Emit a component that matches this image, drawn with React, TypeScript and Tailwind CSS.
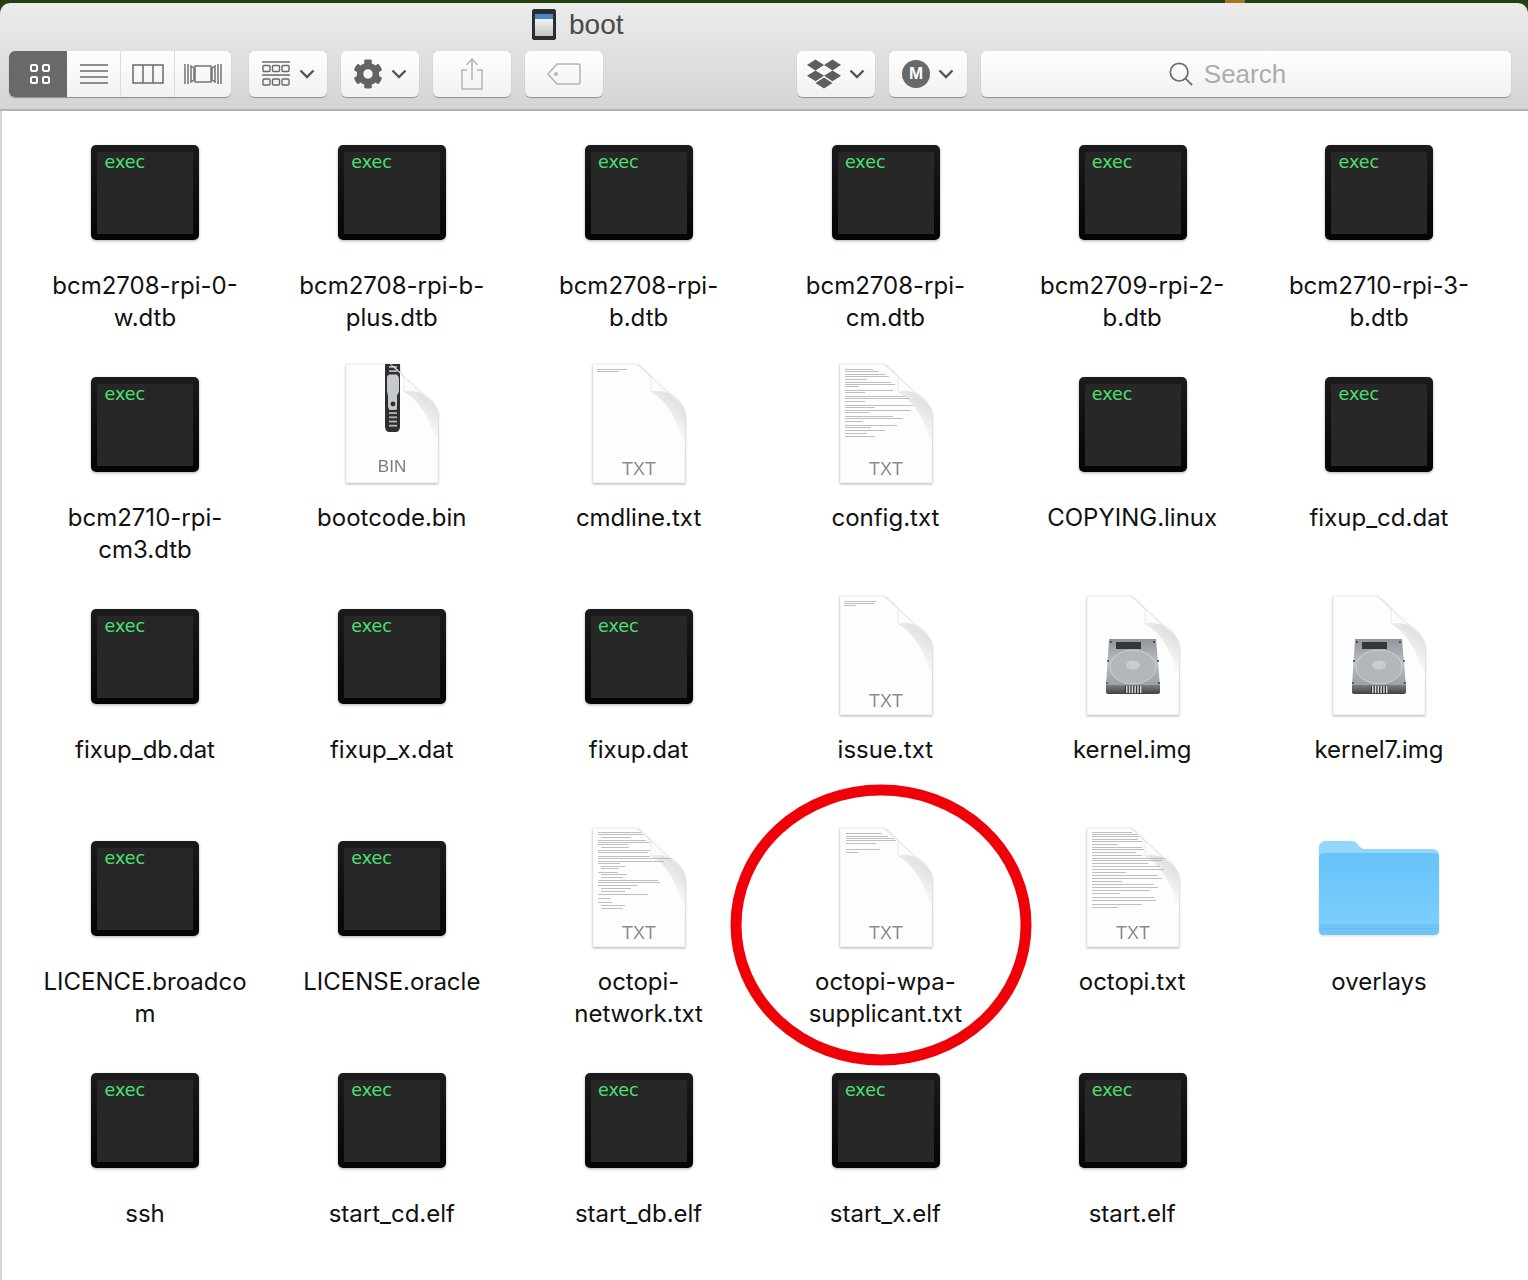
import { FaCog, FaDropbox } from "react-icons/fa";

type Item = {
  lines: string[];
  kind: "exec" | "txt" | "bin" | "img" | "folder";
  text?: number[][];
};

// y, x, width of the tiny lines on the text document previews
const cmdlineText = [[5, 4, 30], [7, 4, 22]];
const issueText = [[5, 4, 32], [7, 4, 30], [9, 4, 12]];
const configText = [
  [5, 5, 28], [7, 5, 34], [10, 5, 40], [12, 5, 44], [15, 5, 22], [18, 5, 46], [20, 5, 50], [22, 5, 14], [26, 5, 48],
  [28, 5, 20], [32, 5, 60], [34, 5, 64], [37, 5, 20], [41, 5, 68], [43, 5, 30], [46, 5, 66], [48, 5, 24], [52, 5, 48],
  [54, 5, 58], [57, 5, 18], [61, 5, 52], [63, 5, 26], [66, 5, 40], [69, 5, 22], [72, 5, 30],
];
const networkText = [
  [4, 5, 50], [6, 5, 52], [9, 8, 30], [12, 5, 48], [14, 5, 54], [16, 5, 30], [19, 8, 28], [22, 5, 54], [24, 5, 50],
  [28, 5, 60], [30, 5, 74], [33, 5, 66], [35, 5, 22], [38, 8, 24], [40, 8, 18], [44, 5, 20], [46, 8, 26], [49, 8, 22],
  [52, 5, 60], [54, 5, 62], [57, 5, 40], [60, 8, 30], [63, 8, 24], [66, 5, 50], [70, 5, 12], [74, 5, 14], [77, 8, 24],
  [80, 8, 22],
];
const wpaText = [[5, 6, 36], [8, 6, 42], [10, 6, 50], [12, 6, 50], [15, 6, 30], [21, 6, 34], [24, 6, 12]];
const octopiText = [
  [4, 5, 40], [6, 5, 52], [8, 5, 50], [11, 5, 46], [13, 5, 50], [16, 5, 26], [19, 5, 50], [21, 5, 52], [24, 5, 44],
  [27, 5, 50], [30, 5, 74], [32, 5, 70], [35, 5, 56], [38, 5, 68], [41, 5, 72], [44, 5, 34], [47, 5, 66], [50, 5, 70],
  [53, 5, 30], [56, 5, 62], [59, 5, 66], [62, 5, 58], [65, 5, 28], [69, 5, 62], [72, 5, 64], [76, 5, 50], [79, 5, 26],
];

const items: Item[] = [
  { lines: ["bcm2708-rpi-0-", "w.dtb"], kind: "exec" },
  { lines: ["bcm2708-rpi-b-", "plus.dtb"], kind: "exec" },
  { lines: ["bcm2708-rpi-", "b.dtb"], kind: "exec" },
  { lines: ["bcm2708-rpi-", "cm.dtb"], kind: "exec" },
  { lines: ["bcm2709-rpi-2-", "b.dtb"], kind: "exec" },
  { lines: ["bcm2710-rpi-3-", "b.dtb"], kind: "exec" },
  { lines: ["bcm2710-rpi-", "cm3.dtb"], kind: "exec" },
  { lines: ["bootcode.bin"], kind: "bin" },
  { lines: ["cmdline.txt"], kind: "txt", text: cmdlineText },
  { lines: ["config.txt"], kind: "txt", text: configText },
  { lines: ["COPYING.linux"], kind: "exec" },
  { lines: ["fixup_cd.dat"], kind: "exec" },
  { lines: ["fixup_db.dat"], kind: "exec" },
  { lines: ["fixup_x.dat"], kind: "exec" },
  { lines: ["fixup.dat"], kind: "exec" },
  { lines: ["issue.txt"], kind: "txt", text: issueText },
  { lines: ["kernel.img"], kind: "img" },
  { lines: ["kernel7.img"], kind: "img" },
  { lines: ["LICENCE.broadco", "m"], kind: "exec" },
  { lines: ["LICENSE.oracle"], kind: "exec" },
  { lines: ["octopi-", "network.txt"], kind: "txt", text: networkText },
  { lines: ["octopi-wpa-", "supplicant.txt"], kind: "txt", text: wpaText },
  { lines: ["octopi.txt"], kind: "txt", text: octopiText },
  { lines: ["overlays"], kind: "folder" },
  { lines: ["ssh"], kind: "exec" },
  { lines: ["start_cd.elf"], kind: "exec" },
  { lines: ["start_db.elf"], kind: "exec" },
  { lines: ["start_x.elf"], kind: "exec" },
  { lines: ["start.elf"], kind: "exec" },
];

const ExecIcon = () => (
  <div className="w-[108px] h-[95px] ml-[1px] rounded-[5px] bg-gradient-to-b from-[#1b1b1b] to-[#050505] pt-[7px] px-[6px] pb-[6px] shadow-[0_1px_3px_rgba(40,60,80,0.4)]">
    <div className="w-full h-full bg-[#272727] pl-[7px] text-[17.5px] leading-[20px] text-[#4be06e] font-['DejaVu_Sans',sans-serif]">
      exec
    </div>
  </div>
);

const DocPage = ({ children }: { children?: React.ReactNode }) => (
  <svg width="96" height="122" viewBox="-2 -1 96 122" className="ml-[1px] drop-shadow-[0_1px_1px_rgba(0,0,0,0.3)]">
    <defs>
      <linearGradient id="flap" x1="0" y1="0" x2="1" y2="1">
        <stop offset="0" stopColor="#ffffff" />
        <stop offset="0.7" stopColor="#fafafa" />
        <stop offset="1" stopColor="#dedede" />
      </linearGradient>
      <linearGradient id="under" gradientUnits="userSpaceOnUse" x1="90" y1="40" x2="70" y2="62">
        <stop offset="0" stopColor="#dedede" />
        <stop offset="1" stopColor="#fdfdfd" />
      </linearGradient>
    </defs>
    <path d="M0 0 H44 L85 38 C90 43 92 47 92 52 V119 H0 Z" fill="#fdfdfd" stroke="#e2e2e2" strokeWidth="0.5" />
    <path d="M58 28 C72 26 84 30 92 50 V88 C88 62 76 38 58 28 Z" fill="url(#under)" />
    {children}
    <path d="M44 0 C50 4 56 9 58 14 V28 C72 26 85 30 91 47 C90 43 88 41 85 38 Z" fill="url(#flap)" stroke="#dadada" strokeWidth="0.5" />
  </svg>
);

const TxtIcon = ({ text }: { text: number[][] }) => (
  <DocPage>
    {text.map(([y, x, w], i) => {
      const maxX = y < 14 ? 44 + y : y < 29 ? 57 : 86;
      return <rect key={i} x={x} y={y} width={Math.min(w, maxX - x)} height="0.8" fill="#b0b0b0" />;
    })}
    <text x="46" y="111" textAnchor="middle" fontSize="18" fontFamily="'Liberation Sans', sans-serif" fill="#8a8a8a">
      TXT
    </text>
  </DocPage>
);

const BinIcon = () => (
  <DocPage>
    <path d="M39 0 H54 V63 C54 66 52 68 50 68 H43 C41 68 39 66 39 63 Z" fill="#2f2f2f" />
    {[...Array(15)].map((_, i) => (
      <rect key={i} x="43" y={2 + i * 4.2} width="8" height="1.8" fill="#b4b4b4" />
    ))}
    <path d="M43 11 H50 C52 11 53 13 53 15 V27 C53 29 51 30 51 32 V42 C51 45 49 46 47 46 C44 46 42 45 42 42 V32 C42 30 41 29 41 27 V15 C41 13 41 11 43 11 Z" fill="#c3c9cd" />
    <circle cx="47" cy="40" r="2.4" fill="#303030" />
    <text x="46" y="108" textAnchor="middle" fontSize="17" fontFamily="'Liberation Sans', sans-serif" fill="#7c7c7c">
      BIN
    </text>
  </DocPage>
);

const ImgIcon = () => (
  <DocPage>
    <defs>
      <linearGradient id="disk" x1="0" y1="0" x2="0" y2="1">
        <stop offset="0" stopColor="#8f959a" />
        <stop offset="0.5" stopColor="#b8bdc1" />
        <stop offset="1" stopColor="#9a9fa3" />
      </linearGradient>
      <linearGradient id="diskBase" x1="0" y1="0" x2="0" y2="1">
        <stop offset="0" stopColor="#7a7e82" />
        <stop offset="1" stopColor="#3f4245" />
      </linearGradient>
    </defs>
    <path d="M22 43 H69 L73 90 H19 Z" fill="url(#disk)" />
    <path d="M19 89 H73 V96 C73 97 72 98 71 98 H21 C20 98 19 97 19 96 Z" fill="url(#diskBase)" />
    <rect x="29" y="46" width="25" height="7" fill="#34373a" />
    <ellipse cx="46" cy="71" rx="23" ry="17" fill="#b2b7bb" stroke="#d3d7da" strokeWidth="0.8" />
    <ellipse cx="46" cy="69" rx="7" ry="4.5" fill="#c9cdd0" />
    {[[24, 46], [67, 46], [21, 65], [71, 65], [20, 87], [72, 87]].map(([cx, cy]) => (
      <circle key={`${cx}-${cy}`} cx={cx} cy={cy} r="0.9" fill="#333" />
    ))}
    <rect x="38" y="90" width="17" height="7" fill="#2e2e2e" />
    {[0, 1, 2, 3, 4, 5].map((i) => (
      <rect key={i} x={39 + i * 2.8} y="90" width="1.5" height="7" fill="#dcdcdc" />
    ))}
  </DocPage>
);

const FolderIcon = () => (
  <svg width="120" height="96" viewBox="0 0 120 96" className="ml-[1px] drop-shadow-[0_1px_1px_rgba(0,0,0,0.15)]">
    <defs>
      <linearGradient id="folderBody" x1="0" y1="0" x2="0" y2="1">
        <stop offset="0" stopColor="#67c3fa" />
        <stop offset="1" stopColor="#7dd0fd" />
      </linearGradient>
    </defs>
    <path d="M0 8 C0 3 3 1 7 1 H32 C37 1 38 4 41 7 C43 9 44 9 47 9 H113 C118 9 120 12 120 16 V30 H0 Z" fill="#92d8fe" />
    <path d="M0 17 C0 14 2 13 5 13 H115 C118 13 120 14 120 17 V90 C120 93 118 95 115 95 H5 C2 95 0 93 0 90 Z" fill="url(#folderBody)" />
    <path d="M0 84 H120 V90 C120 93 118 95 115 95 H5 C2 95 0 93 0 90 Z" fill="#70c4f6" />
    <rect x="0" y="88" width="120" height="1" fill="#66bbf0" />
  </svg>
);

const FileIcon = ({ item }: { item: Item }) => {
  switch (item.kind) {
    case "exec":
      return <ExecIcon />;
    case "txt":
      return <TxtIcon text={item.text ?? []} />;
    case "bin":
      return <BinIcon />;
    case "img":
      return <ImgIcon />;
    default:
      return <FolderIcon />;
  }
};

const Chevron = () => (
  <svg width="16" height="10" viewBox="0 0 16 10" fill="none" stroke="#555" strokeWidth="2.4">
    <path d="M1.5 1.5 L8 8 L14.5 1.5" />
  </svg>
);

const ToolButton = ({ width, children }: { width: string; children: React.ReactNode }) => (
  <div
    className={`${width} h-[46px] flex items-center justify-center gap-[8px] rounded-[6px] bg-gradient-to-b from-white to-[#f1f1f1] shadow-[0_1px_1px_rgba(0,0,0,0.35)]`}
  >
    {children}
  </div>
);

export default function App() {
  return (
    <div className="relative w-[1528px] h-[1280px] overflow-hidden bg-[#23400e] pt-[3px] font-['Liberation_Sans',Arial,sans-serif]">
      <div className="absolute top-0 left-[1225px] w-[20px] h-[3px] bg-[#a8731c]" />
      {/* Title bar and toolbar */}
      <header className="h-[108px] rounded-t-[10px] bg-gradient-to-b from-[#ececec] to-[#d4d4d4] border-b-2 border-[#b4b4b4]">
        <div className="h-[48px] pl-[532px] pb-[6px] flex items-center gap-[13px]">
          <svg width="24" height="31" viewBox="0 0 24 31">
            <defs>
              <linearGradient id="sdBody" x1="0" y1="0" x2="0" y2="1">
                <stop offset="0" stopColor="#f2f2f2" />
                <stop offset="1" stopColor="#c4c4c4" />
              </linearGradient>
            </defs>
            <path d="M0 2 C0 1 1 0 2 0 H22 C23 0 24 1 24 2 V29 C24 30 23 31 22 31 H2 C1 31 0 30 0 29 Z" fill="#2a2d30" />
            <rect x="3" y="5" width="18" height="5" fill="#4a86cf" />
            <rect x="3" y="10" width="18" height="17" fill="url(#sdBody)" />
          </svg>
          <span className="mt-[2px] text-[28px] leading-[32px] text-[#4a4a4a]">boot</span>
        </div>
        <div className="flex pl-[9px]">
          {/* View switcher */}
          <div className="flex h-[46px] w-[222px] rounded-[6px] bg-gradient-to-b from-white to-[#f1f1f1] shadow-[0_1px_1px_rgba(0,0,0,0.35)]">
            <div className="w-[58px] pl-[3px] flex items-center justify-center rounded-l-[6px] bg-[#696969]">
              <svg width="22" height="22" viewBox="0 0 22 22" fill="none" stroke="#fff" strokeWidth="2">
                <rect x="2" y="2" width="6" height="6" rx="1.5" />
                <rect x="14" y="2" width="6" height="6" rx="1.5" />
                <rect x="2" y="14" width="6" height="6" rx="1.5" />
                <rect x="14" y="14" width="6" height="6" rx="1.5" />
              </svg>
            </div>
            <div className="w-[54px] flex items-center justify-center border-r border-[#dcdcdc]">
              <svg width="30" height="22" viewBox="0 0 30 22" stroke="#6a6a6a" strokeWidth="1.4">
                <path d="M1 2 H29 M1 8 H29 M1 14 H29 M1 20 H29" />
              </svg>
            </div>
            <div className="w-[54px] flex items-center justify-center border-r border-[#dcdcdc]">
              <svg width="32" height="20" viewBox="0 0 32 20" fill="none" stroke="#6a6a6a" strokeWidth="1.5">
                <rect x="1" y="1" width="30" height="18" />
                <path d="M11 1 V19 M21 1 V19" />
              </svg>
            </div>
            <div className="flex-1 flex items-center justify-center">
              <svg width="38" height="22" viewBox="0 0 38 22" fill="none" stroke="#6a6a6a" strokeWidth="1.4">
                <rect x="11" y="3" width="16" height="16" />
                <path d="M1 1 V21 M4 1 V21 M7 3 L10 5 V17 L7 19 Z M37 1 V21 M34 1 V21 M31 3 L28 5 V17 L31 19 Z" />
              </svg>
            </div>
          </div>

          <div className="w-[18px]" />
          <ToolButton width="w-[78px]">
            <svg width="30" height="27" viewBox="0 0 30 27" fill="none" stroke="#6a6a6a" strokeWidth="1.4">
              <path d="M1 1 H29 M1 14 H29" />
              <rect x="2" y="4.5" width="7" height="6" rx="1" />
              <rect x="11.5" y="4.5" width="7" height="6" rx="1" />
              <rect x="21" y="4.5" width="7" height="6" rx="1" />
              <rect x="2" y="18" width="7" height="6" rx="1" />
              <rect x="11.5" y="18" width="7" height="6" rx="1" />
              <rect x="21" y="18" width="7" height="6" rx="1" />
            </svg>
            <Chevron />
          </ToolButton>
          <div className="w-[14px]" />
          <ToolButton width="w-[78px]">
            <FaCog size={30} color="#636363" />
            <Chevron />
          </ToolButton>
          <div className="w-[14px]" />
          <ToolButton width="w-[78px]">
            <svg width="24" height="32" viewBox="0 0 24 32" fill="none" stroke="#b4b4b4" strokeWidth="1.5">
              <path d="M7 12 H2 V31 H22 V12 H17 M12 22 V1 M6.5 7 L12 1 L17.5 7" />
            </svg>
          </ToolButton>
          <div className="w-[14px]" />
          <ToolButton width="w-[78px]">
            <svg width="34" height="22" viewBox="0 0 34 22" fill="none" stroke="#b4b4b4" strokeWidth="1.5">
              <path d="M10 1 H31 C32 1 33 2 33 3 V19 C33 20 32 21 31 21 H10 L1 11 Z" />
              <circle cx="9" cy="11" r="1.2" />
            </svg>
          </ToolButton>

          <div className="w-[194px]" />
          <ToolButton width="w-[78px]">
            <FaDropbox size={34} color="#5e5e5e" />
            <Chevron />
          </ToolButton>
          <div className="w-[14px]" />
          <ToolButton width="w-[78px]">
            <div className="w-[28px] h-[28px] rounded-full bg-[#696969] text-white text-[17px] font-bold flex items-center justify-center">
              M
            </div>
            <Chevron />
          </ToolButton>
          <div className="w-[14px]" />
          <div className="w-[530px] h-[46px] pr-[38px] flex items-center justify-center gap-[10px] rounded-[6px] bg-gradient-to-b from-white to-[#f1f1f1] shadow-[0_1px_1px_rgba(0,0,0,0.35)]">
            <svg width="26" height="26" viewBox="0 0 28 28" fill="none" stroke="#6a6a6a" strokeWidth="1.8">
              <circle cx="12" cy="12" r="9.5" />
              <path d="M19 19 L26 26" />
            </svg>
            <span className="text-[26px] leading-[32px] text-[#acacac]">Search</span>
          </div>
        </div>
      </header>

      {/* File grid */}
      <main className="h-[1169px] bg-white border-l-2 border-[#d6d6d6] pt-[17px] pl-[19.6px] overflow-hidden">
        <div className="grid grid-cols-[repeat(6,246.8px)] auto-rows-[232px]">
          {items.map((item) => (
            <div key={item.lines.join("")} className="flex flex-col items-center">
              <div className="h-[128px] flex items-center justify-center">
                <FileIcon item={item} />
              </div>
              <div className="mt-[14px] text-center text-[24px] leading-[32px] text-[#111] whitespace-nowrap font-['Inter',sans-serif]">
                {item.lines.map((line) => (
                  <div key={line}>{line}</div>
                ))}
              </div>
            </div>
          ))}
        </div>
      </main>

      {/* Hand drawn circle over the file */}
      <svg width="302" height="282" viewBox="0 0 302 282" className="absolute left-[730px] top-[784px]" fill="none">
        <ellipse cx="151" cy="141" rx="145" ry="135" stroke="#f00008" strokeWidth="11" />
      </svg>
    </div>
  );
}
